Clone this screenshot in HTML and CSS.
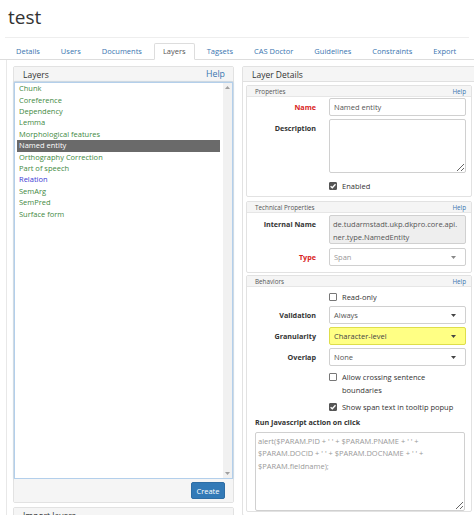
FILE: index.html
```html
<!DOCTYPE html>
<html>
<head>
<meta charset="utf-8">
<title>test</title>
<link rel="stylesheet" href="styles.css">
</head>
<body>
<div class="page-header"><h1>test</h1></div>
<ul class="tabs">
  <li><a>Details</a></li>
  <li><a>Users</a></li>
  <li><a>Documents</a></li>
  <li class="active"><a>Layers</a></li>
  <li><a>Tagsets</a></li>
  <li><a>CAS Doctor</a></li>
  <li><a>Guidelines</a></li>
  <li><a>Constraints</a></li>
  <li><a>Export</a></li>
</ul>
<div class="tab-content">
  <div class="col-left">
    <div class="panel">
      <div class="panel-heading"><span>Layers</span><a class="help">Help</a></div>
      <div class="listbox">
        <div class="items">
          <div class="item green">Chunk</div>
          <div class="item green">Coreference</div>
          <div class="item green">Dependency</div>
          <div class="item green">Lemma</div>
          <div class="item green">Morphological features</div>
          <div class="item selected">Named entity</div>
          <div class="item green">Orthography Correction</div>
          <div class="item green">Part of speech</div>
          <div class="item blue">Relation</div>
          <div class="item green">SemArg</div>
          <div class="item green">SemPred</div>
          <div class="item green">Surface form</div>
        </div>
        <div class="scrollbar">
          <svg class="arrow" width="5" height="3" viewBox="0 0 5 3"><path d="M0 3L2.5 0L5 3Z" fill="#a0a0a0"/></svg>
          <svg class="arrow" width="5" height="3" viewBox="0 0 5 3"><path d="M0 0L2.5 3L5 0Z" fill="#a0a0a0"/></svg>
        </div>
      </div>
      <div class="panel-footer"><button class="btn">Create</button></div>
    </div>
    <div class="panel next-panel">
      <div class="panel-heading"><span>Import layers</span></div>
    </div>
  </div>
  <div class="col-right">
    <div class="panel">
      <div class="panel-heading"><span>Layer Details</span></div>
      <div class="panel-body">
        <div class="subpanel">
          <div class="sub-heading"><span>Properties</span><a class="help-small">Help</a></div>
          <div class="sub-body">
            <div class="row">
              <label class="label req">Name</label>
              <div class="ctrl"><div class="input">Named entity</div></div>
            </div>
            <div class="row gap3">
              <label class="label">Description</label>
              <div class="ctrl"><textarea class="textarea desc"></textarea></div>
            </div>
            <div class="row check-row enabled-row">
              <div class="label"></div>
              <div class="ctrl check"><span class="cb checked"><svg width="8" height="8" viewBox="0 0 8 8"><path d="M1.6 4.2L3.3 5.8L6.5 2.2" stroke="#fff" stroke-width="1.3" fill="none"/></svg></span><span>Enabled</span></div>
            </div>
          </div>
        </div>

        <div class="subpanel tech">
          <div class="sub-heading"><span>Technical Properties</span><a class="help-small">Help</a></div>
          <div class="sub-body pad-bottom">
            <div class="row first">
              <label class="label">Internal Name</label>
              <div class="ctrl"><div class="readonly">de.tudarmstadt.ukp.dkpro.core.api.<br>ner.type.NamedEntity</div></div>
            </div>
            <div class="row gap4">
              <label class="label req">Type</label>
              <div class="ctrl"><div class="select muted"><span>Span</span><svg width="5" height="3" viewBox="0 0 5 3"><path d="M0 0L2.5 3L5 0Z" fill="#888"/></svg></div></div>
            </div>
          </div>
        </div>

        <div class="subpanel behav">
          <div class="sub-heading"><span>Behaviors</span><a class="help-small">Help</a></div>
          <div class="sub-body">
            <div class="row check-row readonly-row">
              <div class="label"></div>
              <div class="ctrl check"><span class="cb"></span><span>Read-only</span></div>
            </div>
            <div class="row gap1">
              <label class="label">Validation</label>
              <div class="ctrl"><div class="select"><span>Always</span><svg width="5" height="3" viewBox="0 0 5 3"><path d="M0 0L2.5 3L5 0Z" fill="#444"/></svg></div></div>
            </div>
            <div class="row gap3">
              <label class="label">Granularity</label>
              <div class="ctrl"><div class="select highlight"><span>Character-level</span><svg width="5" height="3" viewBox="0 0 5 3"><path d="M0 0L2.5 3L5 0Z" fill="#444"/></svg></div></div>
            </div>
            <div class="row gap3">
              <label class="label">Overlap</label>
              <div class="ctrl"><div class="select"><span>None</span><svg width="5" height="3" viewBox="0 0 5 3"><path d="M0 0L2.5 3L5 0Z" fill="#444"/></svg></div></div>
            </div>
            <div class="row check-row multi cross-row">
              <div class="label"></div>
              <div class="ctrl check top"><span class="cb"></span><span class="cb-text">Allow crossing sentence boundaries</span></div>
            </div>
            <div class="row check-row multi show-row">
              <div class="label"></div>
              <div class="ctrl check top"><span class="cb checked"><svg width="8" height="8" viewBox="0 0 8 8"><path d="M1.6 4.2L3.3 5.8L6.5 2.2" stroke="#fff" stroke-width="1.3" fill="none"/></svg></span><span class="cb-text">Show span text in tooltip popup</span></div>
            </div>
            <div class="js-label">Run Javascript action on click</div>
            <textarea class="textarea js">alert($PARAM.PID + ' ' + $PARAM.PNAME + ' ' + $PARAM.DOCID + ' ' + $PARAM.DOCNAME + ' ' + $PARAM.fieldname);</textarea>
          </div>
        </div>
      </div>
    </div>
  </div>
</div>
</body>
</html>
```
FILE: styles.css
```css
* { box-sizing: border-box; margin: 0; padding: 0; }
html, body { width: 474px; height: 515px; overflow: hidden; }
body {
  font-family: "Open Sans", "DejaVu Sans", sans-serif;
  font-size: 7.5px;
  color: #333;
  background: #fff;
}

.page-header {
  margin: 0 5px;
  padding: 7px 3px 0;
  height: 38px;
  border-bottom: 1px solid #eee;
}
.page-header h1 {
  font-size: 19px;
  line-height: 21px;
  font-weight: normal;
  color: #333;
}

.tabs {
  list-style: none;
  display: flex;
  margin-top: 5px;
  padding-left: 7px;
  height: 17px;
  border-bottom: 1px solid #ddd;
}
.tabs li { margin-right: 3px; }
.tabs a {
  display: block;
  height: 17px;
  line-height: 14px;
  padding: 0 8px;
  border: 1px solid transparent;
  border-radius: 2px 2px 0 0;
  color: #3a75b0;
}
.tabs li.active a {
  border-color: #ddd #ddd transparent;
  background: #fff;
  color: #555;
}

.tab-content {
  margin-left: 6px;
  border-left: 1px solid #e8e8e8;
  padding: 6px 0 0 6px;
  display: flex;
  gap: 8px;
  height: 460px;
}
.col-left { width: 221px; flex: none; }
.col-right { width: 234px; flex: none; }

.panel {
  border: 1px solid #e2e2e2;
  border-radius: 2px;
  background: #fff;
}
.panel-heading {
  height: 15px;
  background: #f5f5f5;
  border-bottom: 1px solid #e0e0e0;
  display: flex;
  align-items: center;
  justify-content: space-between;
  padding: 0 8px 0 9px;
  font-size: 8.5px;
  color: #333;
}
.help { color: #3a75b0; font-size: 8.8px; }

.listbox {
  height: 397px;
  border: 1px solid #b3cfeb;
  box-shadow: 0 0 2px rgba(102, 175, 233, 0.45);
  display: flex;
  background: #fff;
}
.items { flex: 1; padding: 0.3px 3px 0 2px; }
.item {
  height: 11.4px;
  line-height: 11.4px;
  padding-left: 2px;
  white-space: nowrap;
}
.green { color: #3f8a3f; }
.blue { color: #3b3bd3; }
.selected { background: #6a6a6a; color: #fff; }
.scrollbar {
  width: 9px;
  background: #f1f1f1;
  display: flex;
  flex-direction: column;
  justify-content: space-between;
  align-items: center;
  padding: 3px 0 3px;
}
.arrow { display: block; }

.panel-footer {
  height: 23px;
  background: #f5f5f5;
  display: flex;
  justify-content: flex-end;
  align-items: flex-start;
  padding: 3px 8px 0 0;
}
.btn {
  height: 17px;
  padding: 0 4.5px;
  background: #337ab7;
  border: 1px solid #2e6da4;
  border-radius: 2px;
  color: #fff;
  font-family: inherit;
  font-size: 7.5px;
}
.next-panel { margin-top: 4px; }
.next-panel .panel-heading { border-bottom: none; }

.panel-body { padding: 3px; }
.subpanel {
  border: 1px solid #e2e2e2;
  border-radius: 2px;
}
.subpanel.tech { margin-top: 4px; }
.subpanel.behav { margin-top: 2px; }
.sub-heading {
  height: 11px;
  background: #f5f5f5;
  border-bottom: 1px solid #e6e6e6;
  display: flex;
  align-items: center;
  justify-content: space-between;
  padding: 0 5px 0 8px;
  font-size: 6.3px;
  color: #555;
}
.help-small { color: #3a75b0; }
.sub-body { padding: 1px 5px 0 0; }
.sub-body.pad-bottom { padding-bottom: 6px; }
.tech .sub-body .row.first { margin-top: 1px; }
.behav .sub-body { padding-top: 0; }

.row { display: flex; align-items: flex-start; }
.gap1 { margin-top: 1px; }
.gap3 { margin-top: 3px; }
.gap4 { margin-top: 4px; }
.label {
  width: 69px;
  flex: none;
  text-align: right;
  font-weight: bold;
  font-size: 7.2px;
  line-height: 18px;
  color: #333;
}
.label.req { color: #d9231d; }
.ctrl { margin-left: 13px; flex: 1; min-width: 0; }

.input, .select {
  height: 18px;
  border: 1px solid #d0d0d0;
  border-radius: 2px;
  padding: 0 4px;
  line-height: 16px;
  color: #555;
  background: #fff;
}
.select {
  display: flex;
  align-items: center;
  justify-content: space-between;
  padding-right: 9px;
}
.select svg { display: block; }
.select.muted { color: #999; }
.select.highlight {
  background: #ffff84;
  border-color: #dede4a;
  color: #444;
}
.readonly {
  height: 29px;
  border: 1px solid #d0d0d0;
  border-radius: 2px;
  background: #eee;
  padding: 1.5px 4px 0 3px;
  line-height: 13px;
  color: #555;
}
.textarea {
  display: block;
  width: 100%;
  border: 1px solid #d0d0d0;
  border-radius: 2px;
  font-family: inherit;
  font-size: 7.5px;
  color: #999;
  background: #fff;
  resize: vertical;
  outline: none;
}
.textarea.desc { height: 54px; }

.check-row .ctrl.check {
  display: flex;
  align-items: center;
  gap: 5px;
  color: #333;
}
.ctrl.check.top { align-items: flex-start; }
.enabled-row { margin-top: 3px; height: 20px; align-items: center; }
.readonly-row { margin-top: 2px; height: 16px; align-items: center; }
.cross-row { margin-top: 4.5px; }
.show-row { margin-top: 4px; }
.cb-text { line-height: 13px; max-width: 116px; }
.cb {
  width: 8px;
  height: 8px;
  flex: none;
  border: 1px solid #777;
  border-radius: 1px;
  background: #fff;
  display: block;
}
.top .cb { margin-top: 2.5px; }
.cb.checked { background: #555; border-color: #555; }
.cb.checked svg { display: block; margin: -1px; }

.js-label {
  margin-top: 2px;
  padding-left: 8px;
  font-weight: bold;
  font-size: 7.2px;
  line-height: 13px;
}
.textarea.js {
  margin: 3.5px 0 0 8px;
  width: 210px;
  height: 79px;
  line-height: 12.5px;
  padding: 1.5px 2px;
}
```
